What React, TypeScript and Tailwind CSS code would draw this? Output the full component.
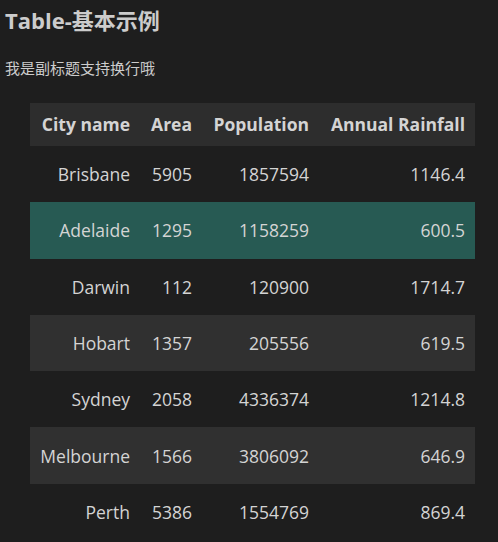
import React from "react";

const rows = [
  ["Brisbane", "5905", "1857594", "1146.4"],
  ["Adelaide", "1295", "1158259", "600.5"],
  ["Darwin", "112", "120900", "1714.7"],
  ["Hobart", "1357", "205556", "619.5"],
  ["Sydney", "2058", "4336374", "1214.8"],
  ["Melbourne", "1566", "3806092", "646.9"],
  ["Perth", "5386", "1554769", "869.4"],
];

export default function App() {
  return (
    <div
      className="w-[498px] h-[542px] bg-[#1e1e1e] text-[#d4d4d4] overflow-hidden"
      style={{ fontFamily: '"Open Sans", "Noto Sans CJK SC", sans-serif' }}
    >
      <h1 className="pl-[5px] pt-[5px] text-[22px] font-bold leading-[30px] text-[#cccccc]">
        Table-基本示例
      </h1>
      <p className="pl-[5px] mt-[23px] text-[15px] leading-[20px] text-[#cccccc]">我是副标题支持换行哦</p>
      <div className="pl-[30px] mt-[25px]">
        <table className="w-[445px] border-collapse">
          <thead>
            <tr className="bg-[#2d2d2d] h-[43px] text-[17.5px] text-[#d4d4d4]">
              <th className="px-[10px] text-right font-bold w-[110px]">City name</th>
              <th className="px-[10px] text-right font-bold w-[62px]">Area</th>
              <th className="px-[10px] text-right font-bold w-[117px]">Population</th>
              <th className="px-[10px] text-right font-bold">Annual Rainfall</th>
            </tr>
          </thead>
          <tbody className="text-[17.5px]">
            {rows.map((r, i) => (
              <tr
                key={r[0]}
                className={
                  "h-[56.3px] " +
                  (i === 1 ? "bg-[#275a53]" : i % 2 === 1 ? "bg-[#303030]" : "bg-transparent")
                }
              >
                {r.map((c, j) => (
                  <td key={j} className="px-[10px] text-right">
                    {c}
                  </td>
                ))}
              </tr>
            ))}
          </tbody>
        </table>
      </div>
    </div>
  );
}
